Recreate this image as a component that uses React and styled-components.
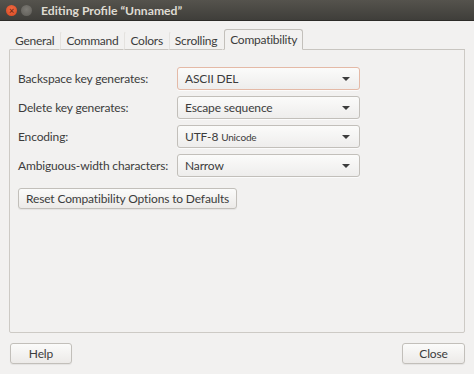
import React from 'react';
import styled, { createGlobalStyle } from 'styled-components';

const GlobalStyle = createGlobalStyle`
  html, body {
    margin: 0;
    padding: 0;
    background: #f2f1f0;
  }
  body {
    font-family: Lato, "Noto Sans", sans-serif;
    font-size: 12px;
    letter-spacing: -0.15px;
    color: #3c3c3c;
  }
`;

const Window = styled.div`
  width: 474px;
  height: 374px;
  display: flex;
  flex-direction: column;
  background: #f2f1f0;
  overflow: hidden;
`;

const TitleBar = styled.div`
  height: 20px;
  flex: none;
  display: flex;
  align-items: center;
  padding-left: 6px;
  gap: 4px;
  background: linear-gradient(#55534d, #3f3e3a);
  border-bottom: 1px solid #2c2b28;
`;

const WinButton = styled.span`
  width: 11px;
  height: 11px;
  border-radius: 50%;
  background: ${p => (p.close ? 'radial-gradient(circle at 50% 40%, #f26d46, #d6461f)' : 'radial-gradient(circle at 50% 40%, #7d7b75, #5e5c57)')};
  display: flex;
  align-items: center;
  justify-content: center;
  color: #7a2a12;
  font-size: 9px;
  line-height: 1;
  font-weight: bold;
`;

const Title = styled.div`
  margin-left: 5px;
  color: #dfdbd2;
  font-weight: bold;
  font-size: 12.2px;
  letter-spacing: 0;
`;

const Body = styled.div`
  flex: 1;
  display: flex;
  flex-direction: column;
  padding: 8px 9px 10px 9px;
`;

const Tabs = styled.div`
  display: flex;
  align-items: flex-end;
  height: 21px;
  position: relative;
  z-index: 1;
`;

const Tab = styled.div`
  height: ${p => (p.active ? '21px' : '19px')};
  display: flex;
  align-items: center;
  padding: 0 5px;
  letter-spacing: -0.25px;
  box-sizing: border-box;
  color: #3c3c3c;
  border: 1px solid ${p => (p.active ? '#c3c0bb' : 'transparent')};
  border-bottom: 1px solid ${p => (p.active ? '#f2f1f0' : '#c8c5c0')};
  border-radius: 3px 3px 0 0;
  margin-left: ${p => (p.active ? '1px' : '0')};
  border-left: 1px solid ${p => (p.active ? '#c3c0bb' : p.first ? 'transparent' : '#e4e2df')};
  background: #f2f1f0;
`;

const TabFill = styled.div`
  flex: 1;
  height: 1px;
  background: #c8c5c0;
`;

const Panel = styled.div`
  flex: 1;
  margin-top: -1px;
  border: 1px solid #cdcac5;
  border-radius: 0 0 2px 2px;
  padding: 17px 8px;
`;

const Grid = styled.div`
  display: grid;
  grid-template-columns: 159px 183px;
  row-gap: 6px;
  align-items: center;
`;

const Label = styled.div`
  color: #3c3c3c;
  white-space: nowrap;
`;

const Combo = styled.div`
  height: 23px;
  box-sizing: border-box;
  display: flex;
  align-items: center;
  justify-content: space-between;
  padding: 0 9px 0 7px;
  border: 1px solid ${p => (p.focus ? '#e4b9a6' : '#c2bfba')};
  border-radius: 3px;
  background: linear-gradient(#fbfbfa, #eeedec);
  box-shadow: 0 1px 0 rgba(255, 255, 255, 0.7);
  color: #3c3c3c;
`;

const Small = styled.span`
  font-size: 10px;
`;

const Arrow = styled.span`
  width: 0;
  height: 0;
  border-left: 4px solid transparent;
  border-right: 4px solid transparent;
  border-top: 4px solid #3c3c3c;
`;

const Button = styled.button`
  font: inherit;
  letter-spacing: inherit;
  color: #3c3c3c;
  height: 21px;
  width: ${p => (p.w ? `${p.w}px` : 'auto')};
  padding: 0 7px;
  border: 1px solid #c2bfba;
  border-radius: 3px;
  background: linear-gradient(#fbfbfa, #eceae8);
  box-shadow: 0 1px 1px rgba(0, 0, 0, 0.06);
`;

const ResetRow = styled.div`
  margin-top: 11px;
  display: flex;
`;

const Footer = styled.div`
  display: flex;
  justify-content: space-between;
  margin-top: 10px;
  padding-left: 1px;
`;

const rows = [
  { label: 'Backspace key generates:', value: 'ASCII DEL', focus: true },
  { label: 'Delete key generates:', value: 'Escape sequence' },
  { label: 'Encoding:', value: <>UTF-8 <Small>Unicode</Small></> },
  { label: 'Ambiguous-width characters:', value: 'Narrow' },
];

const tabs = ['General', 'Command', 'Colors', 'Scrolling', 'Compatibility'];

const App = () => (
  <Window>
    <GlobalStyle />
    <TitleBar>
      <WinButton close>×</WinButton>
      <WinButton />
      <Title>Editing Profile “Unnamed”</Title>
    </TitleBar>
    <Body>
      <Tabs>
        {tabs.map((t, i) => (
          <Tab key={t} first={i === 0} active={t === 'Compatibility'}>{t}</Tab>
        ))}
        <TabFill />
      </Tabs>
      <Panel>
        <Grid>
          {rows.map(r => (
            <React.Fragment key={r.label}>
              <Label>{r.label}</Label>
              <Combo focus={r.focus}>
                <span>{r.value}</span>
                <Arrow />
              </Combo>
            </React.Fragment>
          ))}
        </Grid>
        <ResetRow>
          <Button>Reset Compatibility Options to Defaults</Button>
        </ResetRow>
      </Panel>
      <Footer>
        <Button w={62}>Help</Button>
        <Button w={63}>Close</Button>
      </Footer>
    </Body>
  </Window>
);

export default App;
